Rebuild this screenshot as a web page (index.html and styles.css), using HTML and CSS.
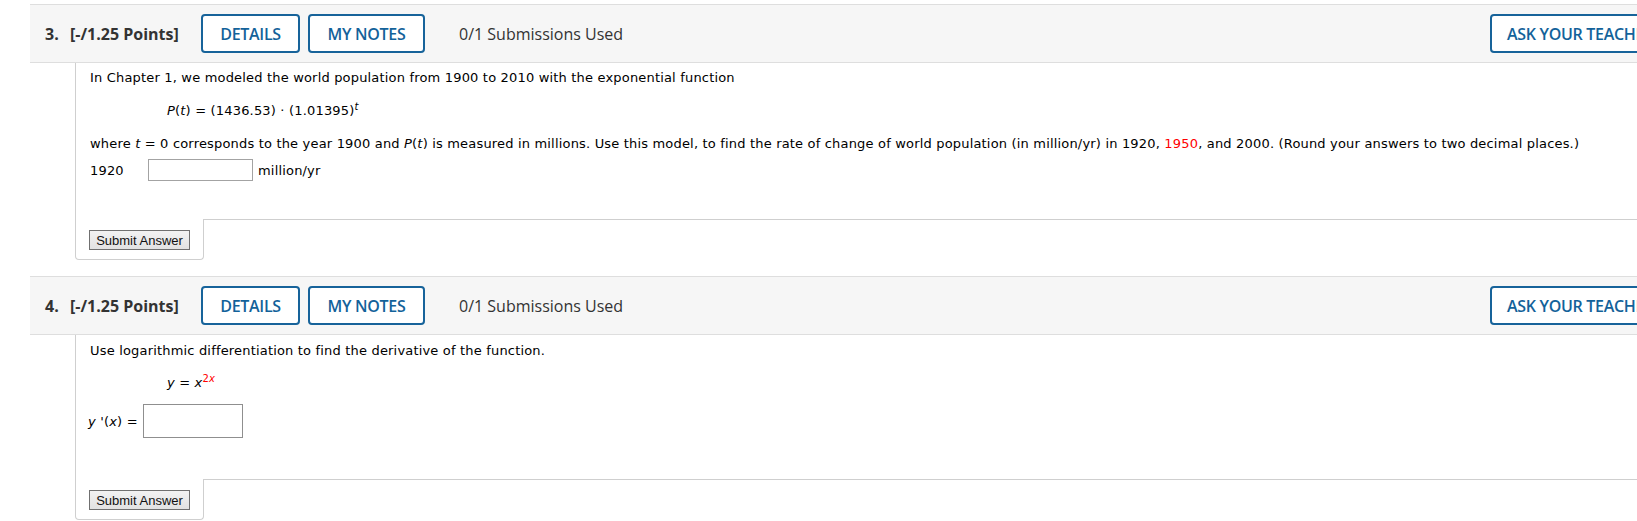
FILE: index.html
```html
<!DOCTYPE html>
<html>
<head>
<meta charset="utf-8">
<link rel="stylesheet" href="styles.css">
</head>
<body>
<div class="page">
  <div class="question">
    <div class="qhead">
      <span class="qnum">3.</span>
      <span class="qpts">[-/1.25 Points]</span>
      <button class="hbtn btn-details">DETAILS</button>
      <button class="hbtn btn-notes">MY NOTES</button>
      <span class="subs">0/1 Submissions Used</span>
      <span class="spacer"></span>
      <button class="hbtn btn-ask">ASK YOUR TEACHER</button>
    </div>
    <div class="qbody q1">
      <div class="line">In Chapter 1, we modeled the world population from 1900 to 2010 with the exponential function</div>
      <div class="line formula"><i>P</i>(<i>t</i>) = (1436.53) · (1.01395)<sup><i>t</i></sup></div>
      <div class="line">where <i>t</i> = 0 corresponds to the year 1900 and <i>P</i>(<i>t</i>) is measured in millions. Use this model, to find the rate of change of world population (in million/yr) in 1920, <span class="red">1950</span>, and 2000. (Round your answers to two decimal places.)</div>
      <div class="ansrow">
        <span class="lbl">1920</span>
        <input class="ans ans1" type="text">
        <span class="unit">million/yr</span>
      </div>
    </div>
    <div class="qfoot">
      <div class="tab"><button class="submit">Submit Answer</button></div>
      <div class="fill"></div>
    </div>
  </div>

  <div class="question">
    <div class="qhead">
      <span class="qnum">4.</span>
      <span class="qpts">[-/1.25 Points]</span>
      <button class="hbtn btn-details">DETAILS</button>
      <button class="hbtn btn-notes">MY NOTES</button>
      <span class="subs">0/1 Submissions Used</span>
      <span class="spacer"></span>
      <button class="hbtn btn-ask">ASK YOUR TEACHER</button>
    </div>
    <div class="qbody q2">
      <div class="line">Use logarithmic differentiation to find the derivative of the function.</div>
      <div class="line formula"><i>y</i> = <i>x</i><sup class="red">2<i>x</i></sup></div>
      <div class="ansrow row2">
        <span class="lbl2"><i>y</i> '(<i>x</i>) =</span>
        <input class="ans ans2" type="text">
      </div>
    </div>
    <div class="qfoot">
      <div class="tab"><button class="submit">Submit Answer</button></div>
      <div class="fill"></div>
    </div>
  </div>
</div>
</body>
</html>
```

FILE: styles.css
```css
html, body {
  margin: 0;
  padding: 0;
  background: #fff;
  overflow: hidden;
}
.page {
  width: 1690px;
  padding-top: 4px;
  padding-left: 30px;
}
.question {
  margin-bottom: 16px;
}
.qhead {
  height: 57px;
  background: #f6f6f6;
  border-top: 1px solid #dedede;
  border-bottom: 1px solid #dedede;
  display: flex;
  align-items: center;
  padding-left: 15px;
  font-family: "Open Sans", "DejaVu Sans", sans-serif;
  color: #333;
}
.qnum {
  font-weight: 700;
  font-size: 16px;
  width: 25px;
}
.qpts {
  font-weight: 700;
  font-size: 16px;
  width: 131px;
}
.hbtn {
  box-sizing: border-box;
  height: 39px;
  border: 2px solid #17639a;
  border-radius: 4px;
  background: #fff;
  color: #13629a;
  font-family: "Open Sans", "DejaVu Sans", sans-serif;
  font-weight: 600;
  font-size: 16px;
  padding: 0 15px;
  margin: 0;
  letter-spacing: -0.3px;
  white-space: nowrap;
}
.btn-details { width: 99px; }
.btn-notes { width: 117px; margin-left: 8px; }
.subs {
  font-size: 16px;
  margin-left: 34px;
  color: #333;
}
.spacer { flex: 1; }
.btn-ask {
  width: 200px;
  margin-right: 30px;
  padding: 0 15px;
  text-align: left;
}
.qbody {
  margin-left: 45px;
  border-left: 1px solid #cfcfcf;
  padding-left: 14px;
  font-family: "DejaVu Sans", Verdana, sans-serif;
  font-size: 13px;
  letter-spacing: 0.18px;
  color: #000;
}
.q1 { padding-top: 7px; padding-bottom: 38px; }
.q2 { padding-top: 8px; padding-bottom: 41px; }
.line { line-height: 16px; }
.q1 .formula { margin: 17px 0 17px 77px; }
.q2 .formula { margin: 16px 0 13px 77px; }
.formula sup { font-size: 10px; line-height: 0; vertical-align: 5px; }
.red { color: #ff0000; }
.ansrow {
  margin-top: 7px;
  display: flex;
  align-items: center;
}
.row2 { margin-top: 13px; }
.lbl { width: 58px; }
.lbl2 { width: 55px; margin-left: -2px; }
.ans {
  box-sizing: border-box;
  margin: 0;
  border: 1px solid #a3a3a3;
  background: #fff;
  padding: 0;
}
.ans1 { width: 105px; height: 22px; }
.ans2 { width: 100px; height: 34px; border-color: #8f8f8f; }
.unit { margin-left: 5px; }
.qfoot {
  margin-left: 45px;
  display: flex;
}
.tab {
  box-sizing: border-box;
  width: 129px;
  height: 41px;
  border: 1px solid #cfcfcf;
  border-top: none;
  border-radius: 0 0 4px 4px;
  padding: 11px 0 0 13px;
}
.fill {
  flex: 1;
  border-top: 1px solid #cfcfcf;
  margin-left: -1px;
}
.submit {
  box-sizing: border-box;
  width: 101px;
  height: 20px;
  margin: 0;
  padding: 0;
  font-family: "Liberation Sans", Arial, sans-serif;
  font-size: 13px;
  color: #111;
  background: linear-gradient(#f2f2f2, #e2e2e2);
  border: 1px solid #707070;
  border-radius: 0;
}
```
